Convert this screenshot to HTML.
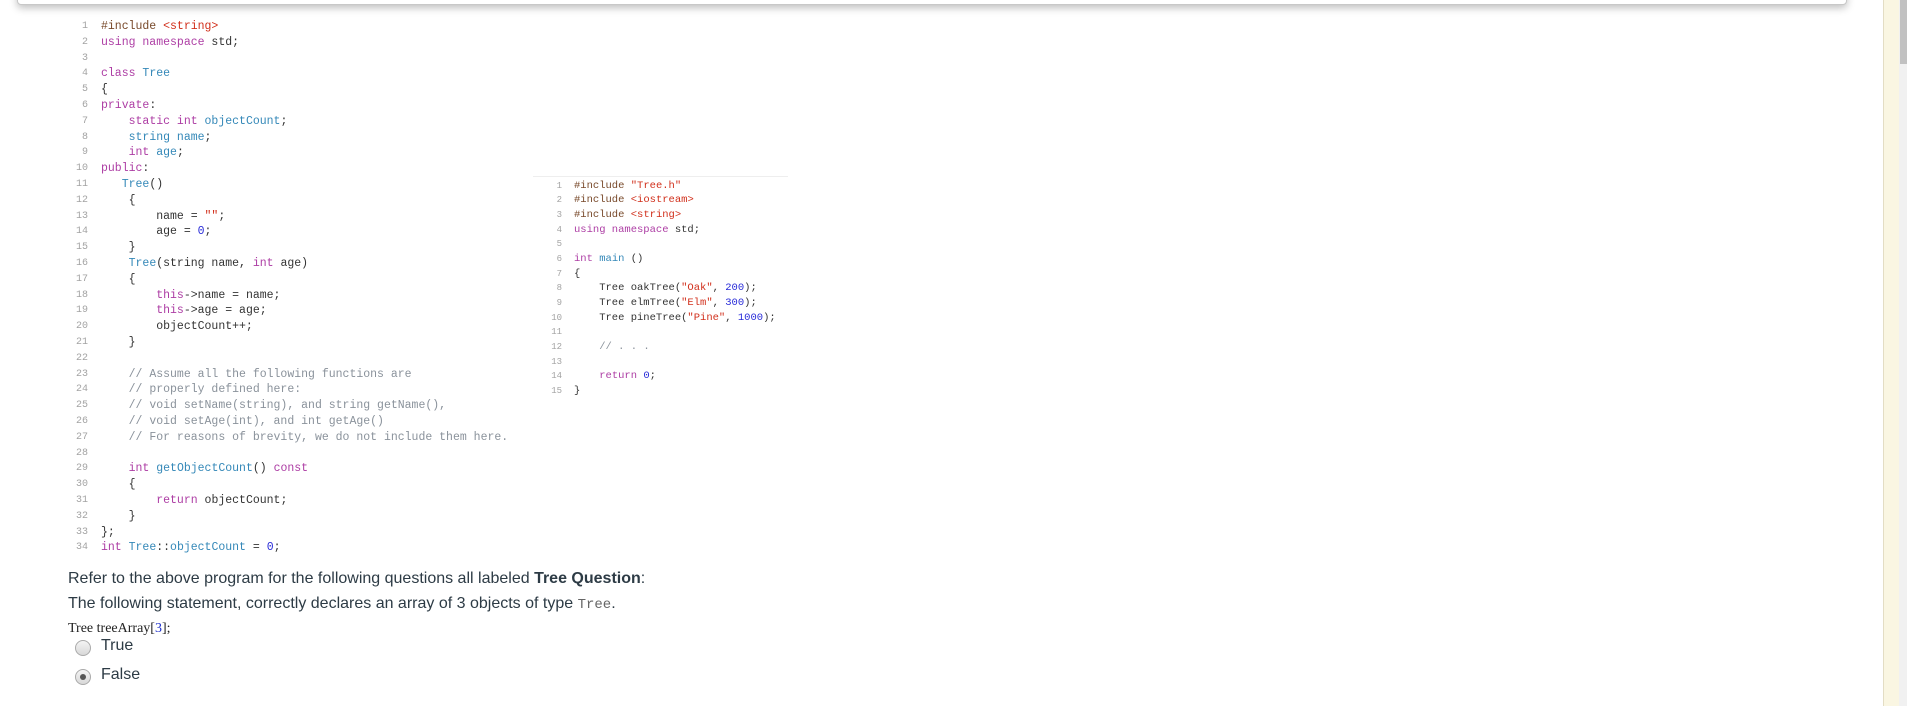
<!DOCTYPE html>
<html><head><meta charset="utf-8"><style>
html,body{margin:0;padding:0;background:#fff;width:1907px;height:706px;overflow:hidden;position:relative;font-family:"Liberation Sans",Arial,sans-serif}
.topbar{position:absolute;left:17px;top:-10px;width:1828px;height:13px;border:1px solid #c8c8c8;border-radius:4px;background:#fff;box-shadow:0 3px 8px rgba(0,0,0,.25)}
.strip{position:absolute;left:1883px;top:0;width:16px;height:706px;background:#faf6e2;border-left:1px solid #e3ddc4;box-sizing:border-box}
.sb{position:absolute;left:1899px;top:0;width:8px;height:706px;background:#f1f1f1}
.thumb{position:absolute;left:1900px;top:0;width:7px;height:64px;background:#c1c1c1}
pre{margin:0;position:absolute;font-family:"Liberation Mono",monospace;white-space:pre}
.c1{left:101px;top:19px;font-size:11.5px;line-height:15.8px;color:#333}
.n1{left:50px;width:38px;top:19px;font-size:10px;line-height:15.8px;color:#a3a3a3;text-align:right}
.c2{left:574px;top:178.7px;font-size:10.5px;line-height:14.65px;color:#333}
.n2{left:540px;width:22px;top:178.7px;font-size:9px;line-height:14.65px;color:#a3a3a3;text-align:right}
.k{color:#ad3da4}.t{color:#3488b8}.s{color:#d12f1b}.p{color:#78492a}.m{color:#272ad8}.cm{color:#8a929b}
.rule{position:absolute;left:533px;top:176px;width:255px;height:1px;background:#eee}
.q{position:absolute;left:68px;font-size:16px;color:#2d3b45;white-space:nowrap}
.radio{position:absolute;left:75px;width:14px;height:14px;border:1px solid #aaa;border-radius:50%;background:linear-gradient(#f4f4f4,#d8d8d8)}
.dot{position:absolute;left:4px;top:4px;width:6px;height:6px;border-radius:50%;background:#555}
</style></head><body>
<div class="topbar"></div>
<div class="strip"></div><div class="sb"></div><div class="thumb"></div>
<pre class="n1">1
2
3
4
5
6
7
8
9
10
11
12
13
14
15
16
17
18
19
20
21
22
23
24
25
26
27
28
29
30
31
32
33
34</pre>
<pre class="c1"><span class="p">#include</span> <span class="s">&lt;string&gt;</span>
<span class="k">using namespace</span> std;

<span class="k">class</span> <span class="t">Tree</span>
{
<span class="k">private</span>:
    <span class="k">static int</span> <span class="t">objectCount</span>;
    <span class="t">string name</span>;
    <span class="k">int</span> <span class="t">age</span>;
<span class="k">public</span>:
   <span class="t">Tree</span>()
    {
        name = <span class="s">""</span>;
        age = <span class="m">0</span>;
    }
    <span class="t">Tree</span>(string name, <span class="k">int</span> age)
    {
        <span class="k">this</span>-&gt;name = name;
        <span class="k">this</span>-&gt;age = age;
        objectCount++;
    }

    <span class="cm">// Assume all the following functions are</span>
    <span class="cm">// properly defined here:</span>
    <span class="cm">// void setName(string), and string getName(),</span>
    <span class="cm">// void setAge(int), and int getAge()</span>
    <span class="cm">// For reasons of brevity, we do not include them here.</span>

    <span class="k">int</span> <span class="t">getObjectCount</span>() <span class="k">const</span>
    {
        <span class="k">return</span> objectCount;
    }
};
<span class="k">int</span> <span class="t">Tree</span>::<span class="t">objectCount</span> = <span class="m">0</span>;</pre>
<div class="rule"></div>
<pre class="n2">1
2
3
4
5
6
7
8
9
10
11
12
13
14
15</pre>
<pre class="c2"><span class="p">#include</span> <span class="s">"Tree.h"</span>
<span class="p">#include</span> <span class="s">&lt;iostream&gt;</span>
<span class="p">#include</span> <span class="s">&lt;string&gt;</span>
<span class="k">using namespace</span> std;

<span class="k">int</span> <span class="t">main</span> ()
{
    Tree oakTree(<span class="s">"Oak"</span>, <span class="m">200</span>);
    Tree elmTree(<span class="s">"Elm"</span>, <span class="m">300</span>);
    Tree pineTree(<span class="s">"Pine"</span>, <span class="m">1000</span>);

    <span class="cm">// . . .</span>

    <span class="k">return</span> <span class="m">0</span>;
}</pre>
<div class="q" style="top:570px">Refer to the above program for the following questions all labeled <b>Tree Question</b>:</div>
<div class="q" style="top:595px">The following statement, correctly declares an array of 3 objects of type <span style="font-family:'Liberation Mono',monospace;font-size:14px;color:#666">Tree</span>.</div>
<div class="q" style="top:621px;font-family:'Liberation Serif',serif;font-size:14px;color:#222">Tree treeArray[<span style="color:#2233cc">3</span>];</div>
<div class="radio" style="top:640px"></div>
<div class="q" style="top:637px;left:101px">True</div>
<div class="radio" style="top:669px"><div class="dot"></div></div>
<div class="q" style="top:666px;left:101px">False</div>
</body></html>
